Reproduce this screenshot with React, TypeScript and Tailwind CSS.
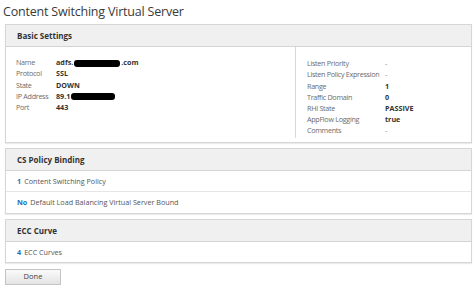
import React from "react";

const Redact = ({ w }: { w: number }) => (
  <span
    className="inline-block align-middle h-[7px] bg-black rounded-[3px] mx-[1px]"
    style={{ width: w }}
  />
);

const Row = ({ label, value, lw }: { label: string; value: React.ReactNode; lw: string }) => (
  <div className="flex h-[11.2px] items-center whitespace-nowrap">
    <div className={`${lw} shrink-0 text-[#6b6b6b] tracking-[-0.3px]`}>{label}</div>
    <div className="font-bold text-[#333]">{value}</div>
  </div>
);

const Panel = ({ title, children }: { title: string; children: React.ReactNode }) => (
  <div className="ml-[5px] w-[467px] border border-[#d6d6d6] bg-white shadow-[0_1px_1px_rgba(0,0,0,0.08)]">
    <div className="h-[22px] bg-[#f0f0f0] border-b border-[#d4d4d4] flex items-center pl-[11px] text-[8px] font-bold text-[#333]">
      {title}
    </div>
    {children}
  </div>
);

export default function App() {
  return (
    <div
      className="w-[474px] h-[291px] bg-white overflow-hidden text-[7.2px]"
      style={{ fontFamily: '"Open Sans", "Noto Sans", sans-serif' }}
    >
      <div className="h-[24px] pl-[3px] pt-[4px] text-[12.5px] leading-[16px] text-[#3a3a3a] tracking-[-0.2px]">
        Content Switching Virtual Server
      </div>
      <Panel title="Basic Settings">
        <div className="flex h-[95px]">
          <div className="w-[290px] pt-[10px] pl-[10px] border-r border-[#d8d8d8] mt-0 mb-[4px]">
            <Row lw="w-[40px]" label="Name" value={<span>adfs.<Redact w={46} />.com</span>} />
            <Row lw="w-[40px]" label="Protocol" value="SSL" />
            <Row lw="w-[40px]" label="State" value="DOWN" />
            <Row lw="w-[40px]" label="IP Address" value={<span>89.1<Redact w={44} /></span>} />
            <Row lw="w-[40px]" label="Port" value="443" />
          </div>
          <div className="pt-[11px] pl-[11px]">
            <Row lw="w-[78px]" label="Listen Priority" value={<span className="font-normal text-[#888]">-</span>} />
            <Row lw="w-[78px]" label="Listen Policy Expression" value={<span className="font-normal text-[#888]">-</span>} />
            <Row lw="w-[78px]" label="Range" value="1" />
            <Row lw="w-[78px]" label="Traffic Domain" value="0" />
            <Row lw="w-[78px]" label="RHI State" value="PASSIVE" />
            <Row lw="w-[78px]" label="AppFlow Logging" value="true" />
            <Row lw="w-[78px]" label="Comments" value={<span className="font-normal text-[#888]">-</span>} />
          </div>
        </div>
      </Panel>
      <div className="h-[5px]" />
      <Panel title="CS Policy Binding">
        <div className="h-[21px] flex items-center pl-[11px] border-b border-[#e6e6e6] text-[#555]">
          <span className="font-bold text-[#1f6fb8] mr-[3px]">1</span>Content Switching Policy
        </div>
        <div className="h-[21px] flex items-center pl-[11px] text-[#555]">
          <span className="font-bold text-[#1f6fb8] mr-[3px]">No</span>Default Load Balancing Virtual Server Bound
        </div>
      </Panel>
      <div className="h-[5px]" />
      <Panel title="ECC Curve">
        <div className="h-[20px] flex items-center pl-[11px] text-[#555]">
          <span className="font-bold text-[#1f6fb8] mr-[3px]">4</span>ECC Curves
        </div>
      </Panel>
      <div className="ml-[5px] mt-[6px] w-[56px] h-[16px] border border-[#c4c4c4] bg-gradient-to-b from-[#fafafa] to-[#e4e4e4] flex items-center justify-center text-[7.5px] text-[#444]">
        Done
      </div>
    </div>
  );
}
